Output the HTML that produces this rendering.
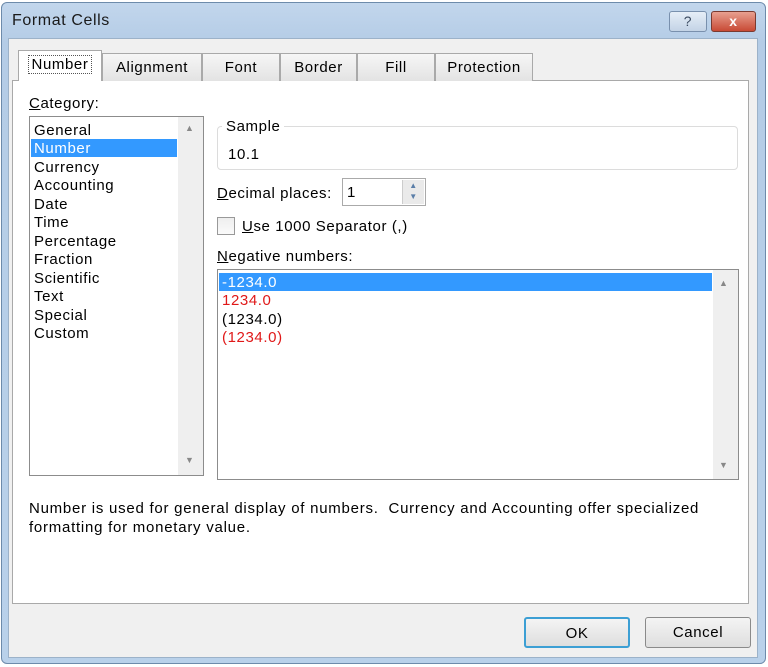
<!DOCTYPE html>
<html><head><style>
*{margin:0;padding:0;box-sizing:border-box}
body{width:768px;height:667px;background:#fff;font-family:"Liberation Sans",sans-serif;font-size:15px;letter-spacing:0.6px;color:#000;position:relative;overflow:hidden}
.a{position:absolute}
.frame{left:1px;top:2px;width:765px;height:662px;border:1px solid #6d8bab;border-radius:6px;background:linear-gradient(#c2d6ec,#b4cce6 40px,#b9d1ea);}
.body{left:8px;top:38px;width:750px;height:620px;background:#f0f0f0;border:1px solid #9cb2c9}
.panel{left:12px;top:80px;width:737px;height:524px;background:#fff;border:1px solid #a9a9a9}
.tab{top:53px;height:28px;background:linear-gradient(#f6f6f6,#e3e3e3);border:1px solid #a9a9a9;border-bottom:none;text-align:center;line-height:27px;font-size:15px}
.list{background:#fff;border:1px solid #8c8c8c}
.it{position:absolute;left:4px;font-size:15px;line-height:18px}
.sb{background:#efefef}
.btn{top:617px;height:31px;border:1px solid #8a8a8a;border-radius:3px;background:linear-gradient(#f4f4f4,#dedede);text-align:center;line-height:29px}
</style></head><body>
<div class="a frame"></div>
<div class="a" style="left:12px;top:12px;font-size:16px;color:#1a1a1a">Format Cells</div>
<div class="a" style="left:669px;top:11px;width:38px;height:21px;border:1px solid #7990ad;border-radius:3px;background:linear-gradient(#e6eef7,#c3d3e6);text-align:center;font-size:14px;line-height:19px;color:#3a4a60">?</div>
<div class="a" style="left:711px;top:11px;width:45px;height:21px;border:1px solid #7a3a30;border-radius:3px;background:linear-gradient(#e8a090,#c84a35);text-align:center;font-weight:bold;color:#fff;line-height:19px;font-size:14px">x</div>
<div class="a body"></div>
<div class="a panel"></div>
<div class="a tab" style="left:18px;top:50px;width:84px;height:31px;background:#fff;z-index:2"><span style="border:1px dotted #555;padding:0 3px">Number</span></div>
<div class="a tab" style="left:102px;width:100px">Alignment</div>
<div class="a tab" style="left:202px;width:78px">Font</div>
<div class="a tab" style="left:280px;width:77px">Border</div>
<div class="a tab" style="left:357px;width:78px">Fill</div>
<div class="a tab" style="left:435px;width:98px">Protection</div>
<div class="a" style="left:29px;top:95px"><u>C</u>ategory:</div>
<div class="a list" style="left:29px;top:116px;width:175px;height:360px">
<div class="a sb" style="left:148px;top:0;width:25px;height:358px"></div>
<div class="a" style="left:155px;top:6px;font-size:9px;color:#888">▲</div>
<div class="a" style="left:155px;top:338px;font-size:9px;color:#888">▼</div>
<div class="a" style="left:1px;top:22px;width:146px;height:18px;background:#3399ff"></div>
<div class="it" style="top:5px">General</div>
<div class="it" style="top:23px;color:#fff">Number</div>
<div class="it" style="top:42px">Currency</div>
<div class="it" style="top:60px">Accounting</div>
<div class="it" style="top:79px">Date</div>
<div class="it" style="top:97px">Time</div>
<div class="it" style="top:116px">Percentage</div>
<div class="it" style="top:134px">Fraction</div>
<div class="it" style="top:153px">Scientific</div>
<div class="it" style="top:171px">Text</div>
<div class="it" style="top:190px">Special</div>
<div class="it" style="top:208px">Custom</div>
</div>
<div class="a" style="left:217px;top:126px;width:521px;height:44px;border:1px solid #dcdcdc;border-radius:4px"></div>
<div class="a" style="left:222px;top:118px;background:#fff;padding:0 4px">Sample</div>
<div class="a" style="left:228px;top:146px">10.1</div>
<div class="a" style="left:217px;top:185px"><u>D</u>ecimal places:</div>
<div class="a" style="left:342px;top:178px;width:84px;height:28px;border:1px solid #aaa;background:#fff;padding:5px 4px">1</div>
<div class="a" style="left:402px;top:180px;width:22px;height:24px;background:#eaeaea;border-left:1px solid #ccc;font-size:8px;color:#5a7ea8;text-align:center;line-height:11px">▲<br>▼</div>
<div class="a" style="left:217px;top:217px;width:18px;height:18px;border:1px solid #999;background:linear-gradient(#eee,#fafafa)"></div>
<div class="a" style="left:242px;top:218px"><u>U</u>se 1000 Separator (,)</div>
<div class="a" style="left:217px;top:248px"><u>N</u>egative numbers:</div>
<div class="a list" style="left:217px;top:269px;width:522px;height:211px">
<div class="a sb" style="left:495px;top:0;width:25px;height:209px"></div>
<div class="a" style="left:501px;top:8px;font-size:9px;color:#888">▲</div>
<div class="a" style="left:501px;top:190px;font-size:9px;color:#888">▼</div>
<div class="a" style="left:1px;top:3px;width:493px;height:18px;background:#3399ff"></div>
<div class="it" style="top:4px;color:#fff">-1234.0</div>
<div class="it" style="top:22px;color:#e01818">1234.0</div>
<div class="it" style="top:41px">(1234.0)</div>
<div class="it" style="top:59px;color:#e01818">(1234.0)</div>
</div>
<div class="a" style="left:29px;top:499px;line-height:19px;white-space:nowrap;letter-spacing:0.75px">Number is used for general display of numbers.&nbsp; Currency and Accounting offer specialized<br>formatting for monetary value.</div>
<div class="a btn" style="left:524px;width:106px;border:2px solid #3c9fd4">OK</div>
<div class="a btn" style="left:645px;width:106px">Cancel</div>
</body></html>
